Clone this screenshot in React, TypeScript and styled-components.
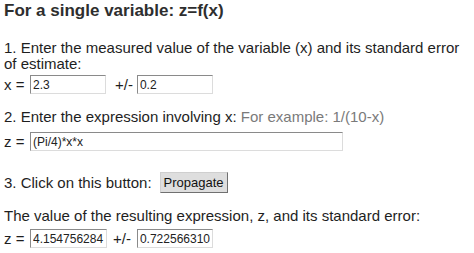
import styled, { createGlobalStyle } from "styled-components";

const GlobalStyle = createGlobalStyle`
  html, body {
    margin: 0;
    padding: 0;
    background: #ffffff;
  }
  body {
    font-family: "Liberation Sans", Arial, sans-serif;
    color: #1e1e1e;
  }
`;

const Page = styled.div`
  width: 474px;
  height: 253px;
  padding: 0 0 0 4px;
  box-sizing: border-box;
  display: flex;
  flex-direction: column;
  overflow: hidden;
`;

const Title = styled.h1`
  margin: 0;
  font-size: 17px;
  line-height: 22px;
  font-weight: bold;
  color: #2e2e2e;
`;

const Para = styled.p<{ $top: number }>`
  margin: ${(p) => p.$top}px 0 0 0;
  font-size: 15px;
  line-height: 16px;
  white-space: nowrap;
`;

const Hint = styled.span`
  color: #7a7a7a;
`;

const Row = styled.div<{ $top: number }>`
  margin-top: ${(p) => p.$top}px;
  display: flex;
  align-items: center;
  font-size: 15px;
  white-space: nowrap;
`;

const Label = styled.span`
  width: 26px;
`;

const Field = styled.input<{ $w: number }>`
  width: ${(p) => p.$w}px;
  height: 19px;
  box-sizing: border-box;
  padding: 1px 2px;
  font-family: "Liberation Sans", Arial, sans-serif;
  font-size: 12px;
  color: #222;
  background: #fff;
  border-style: solid;
  border-width: 1px;
  border-color: #8a8a8a #dcdcdc #dcdcdc #8a8a8a;
  outline: none;
`;

const PlusMinus = styled.span<{ $gap: number; $after: number }>`
  margin: 0 ${(p) => p.$after}px 0 ${(p) => p.$gap}px;
`;

const Button = styled.button`
  margin-left: 8px;
  width: 68px;
  height: 21px;
  padding: 0;
  font-family: "Liberation Sans", Arial, sans-serif;
  font-size: 13px;
  color: #111;
  background: #dedede;
  border-style: solid;
  border-width: 1px;
  border-color: #cfcfcf #707070 #707070 #cfcfcf;
`;

export default function App() {
  return (
    <>
      <GlobalStyle />
      <Page>
        <Title>For a single variable: z=f(x)</Title>
        <Para $top={18}>
          1. Enter the measured value of the variable (x) and its standard error
          <br />
          of estimate:
        </Para>
        <Row $top={3}>
          <Label>x =</Label>
          <Field $w={76} defaultValue="2.3" />
          <PlusMinus $gap={9} $after={4}>+/-</PlusMinus>
          <Field $w={76} defaultValue="0.2" />
        </Row>
        <Para $top={15}>
          2. Enter the expression involving x: <Hint>For example: 1/(10-x)</Hint>
        </Para>
        <Row $top={7}>
          <Label>z =</Label>
          <Field $w={313} defaultValue="(Pi/4)*x*x" />
        </Row>
        <Row $top={21}>
          <span>3. Click on this button:</span>
          <Button>Propagate</Button>
        </Row>
        <Para $top={15}>
          The value of the resulting expression, z, and its standard error:
        </Para>
        <Row $top={5}>
          <Label>z =</Label>
          <Field $w={77} defaultValue="4.154756284" />
          <PlusMinus $gap={6} $after={6}>+/-</PlusMinus>
          <Field $w={76} defaultValue="0.722566310" />
        </Row>
      </Page>
    </>
  );
}
